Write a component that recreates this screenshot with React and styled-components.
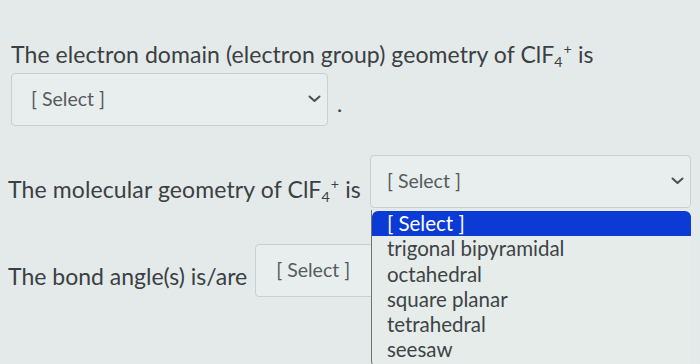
import React from "react";
import styled, { createGlobalStyle } from "styled-components";

const Global = createGlobalStyle`
  html, body { margin: 0; padding: 0; }
  body {
    background: #e4eae9;
    font-family: Lato, "Open Sans", "Liberation Sans", sans-serif;
    color: #3b4043;
    width: 700px;
    height: 364px;
    overflow: hidden;
  }
`;

const Page = styled.div`
  display: flex;
  flex-direction: column;
  padding: 40px 8px 0 8px;
`;

const Question = styled.p`
  margin: 0 0 0 3px;
  font-size: 23px;
  letter-spacing: 0.08px;
  line-height: 28px;
`;

const Row = styled.div`
  display: flex;
  align-items: flex-end;
  gap: ${(p) => p.$gap || 8}px;
  margin-top: ${(p) => p.$top || 0}px;
  margin-left: ${(p) => p.$indent || 0}px;
`;

const Label = styled.span`
  font-size: 23px;
  letter-spacing: ${(p) => p.$ls ?? 0.2}px;
  line-height: 28px;
  margin-bottom: ${(p) => p.$drop || 0}px;
  white-space: nowrap;
`;

const Chem = styled.span`
  white-space: nowrap;
  sub { font-size: 0.62em; vertical-align: -0.25em; line-height: 0; }
  sup { font-size: 0.62em; vertical-align: 0.65em; line-height: 0; margin-left: 1px; }
`;

const SelectWrap = styled.div`
  position: relative;
  flex: none;
  width: ${(p) => p.$w}px;
`;

const SelectBox = styled.div`
  box-sizing: border-box;
  height: 53px;
  display: flex;
  align-items: center;
  justify-content: space-between;
  padding: 0 6px 2px ${(p) => p.$pad || 18}px;
  border: 1px solid #c9d0d0;
  border-radius: 4px;
  background: rgba(238, 243, 242, 0.45);
  font-size: 19.5px;
  color: #565b5f;
`;

const Chevron = styled.svg`
  width: 13px;
  height: 8px;
  flex: none;
  margin-top: 1px;
`;

const Period = styled.span`
  font-size: 22px;
  line-height: 28px;
  margin-bottom: 8px;
`;

const ListBox = styled.ul`
  position: absolute;
  z-index: 2;
  top: calc(100% + 2px);
  left: 1px;
  right: 0;
  margin: 0;
  padding: 1px 0 4px;
  list-style: none;
  background: #e6ecea;
  border-left: 1.5px solid #6e7376;
  border-bottom: 1.5px solid #6e7376;
  border-bottom-left-radius: 7px;
`;

const Option = styled.li`
  padding-left: 15px;
  font-size: 20.5px;
  line-height: 25.3px;
  color: ${(p) => (p.$active ? "#ffffff" : "#3e4346")};
  background: ${(p) => (p.$active ? "#0b3ad4" : "transparent")};
  border-radius: ${(p) => (p.$active ? "6px 6px 0 0" : "0")};
`;

const ChevronIcon = () => (
  <Chevron viewBox="0 0 13 8">
    <path d="M1.5 1.5 L6.5 6 L11.5 1.5" fill="none" stroke="#4a4f52" strokeWidth="2" strokeLinecap="round" strokeLinejoin="round" />
  </Chevron>
);

const Select = ({ w, pad, chevron = true, children }) => (
  <SelectWrap $w={w}>
    <SelectBox $pad={pad}>
      <span>[ Select ]</span>
      {chevron && <ChevronIcon />}
    </SelectBox>
    {children}
  </SelectWrap>
);

const options = [
  "[ Select ]",
  "trigonal bipyramidal",
  "octahedral",
  "square planar",
  "tetrahedral",
  "seesaw",
];

const ClF4 = () => (
  <Chem>
    ClF<sub>4</sub>
    <sup>+</sup>
  </Chem>
);

export default function App() {
  return (
    <>
      <Global />
      <Page>
        <Question>
          The electron domain (electron group) geometry of <ClF4 /> is
        </Question>
        <Row $top={5} $gap={9} $indent={3}>
          <Select w={317} pad={19} />
          <Period>.</Period>
        </Row>
        <Row $top={29} $gap={9}>
          <Label $drop={5} $ls={0.12}>
            The molecular geometry of <ClF4 /> is
          </Label>
          <Select w={321} pad={16}>
            <ListBox>
              {options.map((o, i) => (
                <Option key={o} $active={i === 0}>
                  {o}
                </Option>
              ))}
            </ListBox>
          </Select>
        </Row>
        <Row $top={36} $gap={8}>
          <Label $drop={7} $ls={0}>The bond angle(s) is/are</Label>
          <Select w={140} pad={20} chevron={false} />
        </Row>
      </Page>
    </>
  );
}
